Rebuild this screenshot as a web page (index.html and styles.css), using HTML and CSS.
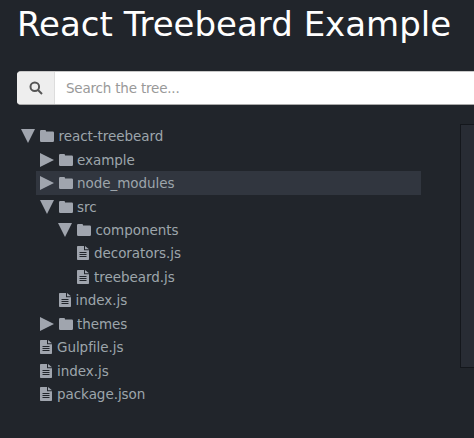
FILE: index.html
```html
<!DOCTYPE html>
<html lang="en">
<head>
    <meta charset="UTF-8">
    <title>React Treebeard Example</title>
    <link rel="stylesheet" href="styles.css">
</head>
<body>
    <svg class="defs" width="0" height="0">
        <symbol id="i-down" viewBox="0 0 14 14"><path d="M0 0H14L7 14Z"/></symbol>
        <symbol id="i-right" viewBox="0 0 14 14"><path d="M0 0L14 7L0 14Z"/></symbol>
        <symbol id="i-folder" viewBox="0 0 14 12"><path d="M1.2 0H5a1 1 0 0 1 1 1V1.600H12.800a1.200 1.200 0 0 1 1.200 1.200V10.800a1.200 1.200 0 0 1-1.200 1.200H1.200A1.200 1.200 0 0 1 0 10.800V1.200A1.200 1.200 0 0 1 1.200 0Z"/></symbol>
        <symbol id="i-file" viewBox="0 0 12 14"><path fill-rule="evenodd" d="M.8 0H7V4.200H12V13.200a.8.800 0 0 1-.8.800H.8A.8.800 0 0 1 0 13.200V.8A.8.800 0 0 1 .8 0ZM8 0L12 3.300H8ZM2.500 6V7H9.500V6ZM2.500 8V9H9.500V8ZM2.500 10V11H9.500V10Z"/></symbol>
    </svg>

    <div class="page">
        <h1 class="title">React Treebeard Example</h1>

        <div class="search">
            <span class="search_addon">
                <svg class="search_icon" viewBox="0 0 14 14"><circle cx="5.800" cy="5.800" r="4.300"/><path d="M9 9L13 13"/></svg>
            </span>
            <span class="search_input">Search the tree...</span>
        </div>

        <div class="content">
            <ul class="tree">
                <li>
                    <div class="row"><svg class="toggle"><use href="#i-down"/></svg><svg class="folder"><use href="#i-folder"/></svg><span>react-treebeard</span></div>
                    <ul>
                        <li><div class="row"><svg class="toggle"><use href="#i-right"/></svg><svg class="folder"><use href="#i-folder"/></svg><span>example</span></div></li>
                        <li><div class="row active"><svg class="toggle"><use href="#i-right"/></svg><svg class="folder"><use href="#i-folder"/></svg><span>node_modules</span></div></li>
                        <li>
                            <div class="row"><svg class="toggle"><use href="#i-down"/></svg><svg class="folder"><use href="#i-folder"/></svg><span>src</span></div>
                            <ul>
                                <li>
                                    <div class="row"><svg class="toggle"><use href="#i-down"/></svg><svg class="folder"><use href="#i-folder"/></svg><span>components</span></div>
                                    <ul>
                                        <li><div class="row leaf"><svg class="file"><use href="#i-file"/></svg><span>decorators.js</span></div></li>
                                        <li><div class="row leaf"><svg class="file"><use href="#i-file"/></svg><span>treebeard.js</span></div></li>
                                    </ul>
                                </li>
                                <li><div class="row leaf"><svg class="file"><use href="#i-file"/></svg><span>index.js</span></div></li>
                            </ul>
                        </li>
                        <li><div class="row"><svg class="toggle"><use href="#i-right"/></svg><svg class="folder"><use href="#i-folder"/></svg><span>themes</span></div></li>
                        <li><div class="row leaf"><svg class="file"><use href="#i-file"/></svg><span>Gulpfile.js</span></div></li>
                        <li><div class="row leaf"><svg class="file"><use href="#i-file"/></svg><span>index.js</span></div></li>
                        <li><div class="row leaf"><svg class="file"><use href="#i-file"/></svg><span>package.json</span></div></li>
                    </ul>
                </li>
            </ul>
            <div class="panel"></div>
        </div>
    </div>
</body>
</html>
```

FILE: styles.css
```css
*{margin:0; padding:0; box-sizing:border-box;}
ul,li{list-style:none;}

html,body{height:100%; overflow:hidden;}
body{
    background-color:#21252b;
    font-family:"DejaVu Sans", sans-serif;
    color:#9da5ab;
}
.defs{display:block; height:0;}

.page{padding:0 0 0 17px;}

.title{
    height:71px;
    font-size:34px;
    font-weight:400;
    line-height:48px;
    color:#fff;
}

.search{
    display:flex;
    height:34px;
    border-radius:4px 0 0 4px;
    border-top:1px solid #c8c8c8;
    border-bottom:1px solid #aaa;
    background-color:#fff;
    overflow:hidden;
}
.search_addon{
    display:flex;
    align-items:center;
    justify-content:center;
    width:38px;
    background-color:#eee;
    border-right:1px solid #ddd;
}
.search_icon{width:14px; height:14px; fill:none; stroke:#555; stroke-width:2;}
.search_input{
    padding-left:11px;
    font-size:13.500px;
    line-height:33px;
    letter-spacing:-.2px;
    color:#999;
}

.content{display:flex; margin-top:19px;}

.tree{width:404px; flex:none; padding-top:.5px; font-size:13.500px; letter-spacing:-.05px;}
.tree ul{padding-left:18.500px;}

.row{
    display:flex;
    align-items:center;
    height:23.450px;
    padding-left:4px;
}
.row.active{background-color:#31363f;}
.row.leaf{padding-left:0;}

.toggle{width:14px; height:14px; fill:#a0a5ae; flex:none;}
.folder{width:14px; height:12px; margin:0 4.500px 0 5px; fill:#a0a5ae; flex:none;}
.file{width:12px; height:14px; margin:0 5px 0 4.500px; fill:#a0a5ae; flex:none;}

.panel{
    flex:1;
    height:244px;
    margin-left:39px;
    background-color:#282c34;
    border:1px solid #14171c;
    border-right:0;
}
```
